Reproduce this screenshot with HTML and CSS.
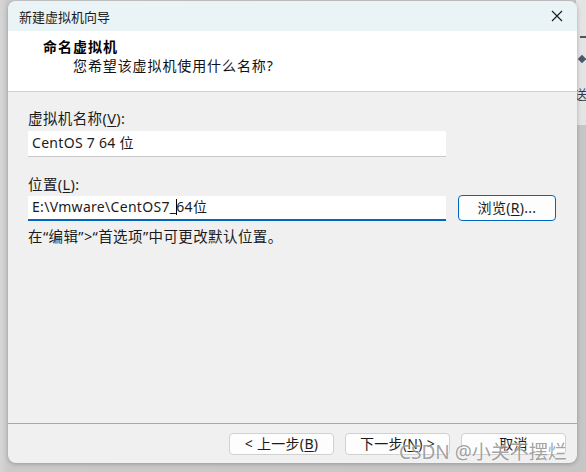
FILE: index.html
```html
<!DOCTYPE html>
<html lang="zh-CN">
<head>
<meta charset="utf-8">
<title>新建虚拟机向导</title>
<link rel="stylesheet" href="styles.css">
</head>
<body>
<div class="desk-strip">
  <span class="mark-dash"></span>
  <span class="mark-dia"></span>
  <span class="mark-char">送</span>
</div>
<div class="window">
  <div class="titlebar">
    <span class="title">新建虚拟机向导</span>
    <svg class="close" width="12" height="12" viewBox="0 0 12 12"><path d="M1 1L11 11M11 1L1 11" stroke="#1a1a1a" stroke-width="1.1" fill="none"/></svg>
  </div>
  <div class="header">
    <div class="h-title">命名虚拟机</div>
    <div class="h-sub">您希望该虚拟机使用什么名称?</div>
  </div>
  <div class="content">
    <div class="label">虚拟机名称(<u>V</u>):</div>
    <div class="input input-name">CentOS 7 64 位</div>
    <div class="label label-loc">位置(<u>L</u>):</div>
    <div class="row">
      <div class="input input-loc">E:\Vmware\CentOS7_<span class="caret"></span>64位</div>
      <div class="btn btn-browse">浏览(<u>R</u>)...</div>
    </div>
    <div class="hint">在“编辑”&gt;“首选项”中可更改默认位置。</div>
  </div>
  <div class="footer">
    <div class="btn">&lt; 上一步(<u>B</u>)</div>
    <div class="btn">下一步(<u>N</u>) &gt;</div>
    <div class="btn">取消</div>
  </div>
  <div class="watermark">CSDN @小关不摆烂</div>
</div>
</body>
</html>
```
FILE: styles.css
```css
html, body {
  margin: 0;
  padding: 0;
}
body {
  width: 586px;
  height: 472px;
  overflow: hidden;
  background: linear-gradient(to right, #d6d6d6 0px, #cacaca 8px, #c6c6c6 100%);
  font-family: "Noto Sans", "Noto Sans CJK SC", sans-serif;
  color: #1b1b1b;
  position: relative;
}
.desk-strip {
  position: absolute;
  right: 0;
  top: 0;
  width: 10px;
  height: 125px;
  background: #e4e4e4;
}
.mark-dash {
  position: absolute;
  left: 4px;
  top: 36px;
  width: 6px;
  height: 2px;
  background: #555;
}
.mark-dia {
  position: absolute;
  left: 3px;
  top: 56px;
  width: 6px;
  height: 6px;
  background: #4a5a6a;
  transform: rotate(45deg);
}
.mark-char {
  position: absolute;
  left: -2px;
  top: 86px;
  font-size: 13px;
  line-height: 16px;
  color: #2a3a55;
}
.window {
  position: relative;
  margin: 1px 0 0 8px;
  width: 569px;
  height: 462px;
  border-radius: 8px;
  overflow: hidden;
  background: #f0f0f0;
  box-shadow: 0 1px 4px rgba(0,0,0,0.25);
  display: flex;
  flex-direction: column;
}
.titlebar {
  height: 30px;
  flex: none;
  background: #eaf3f6;
  display: flex;
  align-items: center;
  justify-content: space-between;
  padding: 0 14px 0 11px;
}
.title {
  font-size: 13px;
  color: #1a1a1a;
}
.close {
  display: block;
}
.header {
  flex: none;
  background: #ffffff;
  border-bottom: 1px solid #cfcfcf;
  box-sizing: border-box;
  height: 61px;
  padding: 7px 0 0 35px;
}
.h-title {
  font-size: 14px;
  line-height: 18px;
  font-weight: bold;
  letter-spacing: 1px;
  color: #000;
}
.h-sub {
  font-size: 14px;
  line-height: 18px;
  letter-spacing: 0.9px;
  margin: 1px 0 0 30px;
  color: #111;
}
.content {
  flex: 1;
  padding: 16px 0 0 20px;
  font-size: 14.5px;
  letter-spacing: 0.4px;
}
.label {
  line-height: 20px;
}
.label-loc {
  margin-top: 17px;
}
u {
  text-decoration-thickness: 1px;
  text-underline-offset: 2px;
}
.input {
  width: 418px;
  box-sizing: border-box;
  background: #fff;
  padding-left: 4px;
  line-height: 22px;
  font-size: 14px;
  letter-spacing: 0.3px;
}
.input-name {
  margin-top: 3px;
  height: 26px;
  padding-top: 1px;
  border-bottom: 1px solid #c9c9c9;
}
.row {
  margin-top: 1px;
  display: flex;
  align-items: flex-start;
}
.input-loc {
  margin-top: 1px;
  height: 25px;
  border-bottom: 2px solid #0067c0;
}
.caret {
  display: inline-block;
  width: 1px;
  height: 16px;
  background: #000;
  vertical-align: -3px;
  margin-right: -1px;
}
.btn {
  box-sizing: border-box;
  width: 105px;
  height: 22px;
  background: #fdfdfd;
  border: 1px solid #d0d0d0;
  border-radius: 4px;
  font-size: 14px;
  line-height: 20px;
  letter-spacing: 0.3px;
  text-align: center;
  color: #1b1b1b;
}
.btn-browse {
  margin-left: 12px;
  width: 98px;
  height: 26px;
  line-height: 24px;
  border: 1px solid #0067c0;
}
.hint {
  margin-top: 5px;
  line-height: 20px;
}
.footer {
  flex: none;
  height: 40px;
  border-top: 1px solid #a8a8a8;
  display: flex;
  justify-content: flex-end;
  gap: 11px;
  padding: 9px 11px 0 0;
  box-sizing: border-box;
}
.watermark {
  position: absolute;
  left: 391px;
  top: 440px;
  font-size: 19px;
  line-height: 22px;
  color: rgba(110,110,110,0.65);
  text-shadow: 0 0 2px #fff;
  white-space: nowrap;
}
```
